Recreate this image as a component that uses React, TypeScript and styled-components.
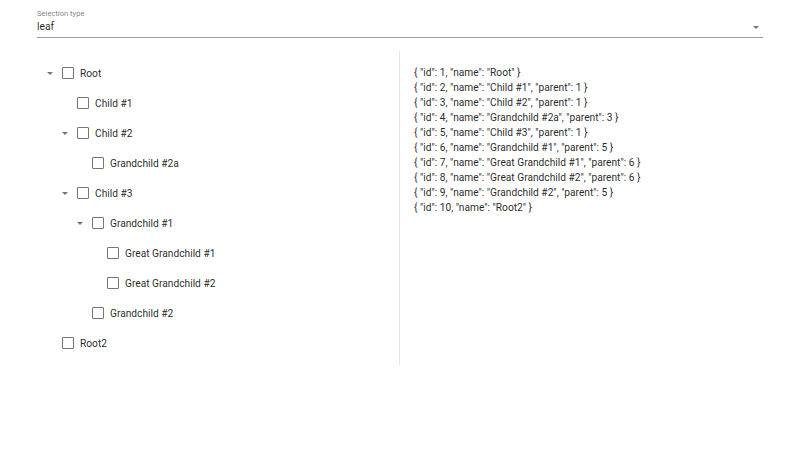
import React from "react";
import styled, { createGlobalStyle } from "styled-components";

type Node = { id: number; name: string; parent?: number };

const nodes: Node[] = [
  { id: 1, name: "Root" },
  { id: 2, name: "Child #1", parent: 1 },
  { id: 3, name: "Child #2", parent: 1 },
  { id: 4, name: "Grandchild #2a", parent: 3 },
  { id: 5, name: "Child #3", parent: 1 },
  { id: 6, name: "Grandchild #1", parent: 5 },
  { id: 7, name: "Great Grandchild #1", parent: 6 },
  { id: 8, name: "Great Grandchild #2", parent: 6 },
  { id: 9, name: "Grandchild #2", parent: 5 },
  { id: 10, name: "Root2" },
];

const GlobalStyle = createGlobalStyle`
  body {
    margin: 0;
    background: #fff;
    font-family: Roboto, "Liberation Sans", sans-serif;
    color: rgba(0, 0, 0, 0.87);
  }
`;

const Page = styled.div`
  padding: 8px 37px 0 37px;
`;

const Select = styled.div`
  display: flex;
  flex-direction: column;
  border-bottom: 1px solid #9e9e9e;
  padding-bottom: 3px;
`;

const Label = styled.div`
  font-size: 7.6px;
  line-height: 12px;
  color: rgba(0, 0, 0, 0.54);
`;

const ValueRow = styled.div`
  display: flex;
  align-items: center;
  justify-content: space-between;
  font-size: 10.2px;
  line-height: 14px;
  padding-right: 4px;
`;

const Caret = styled.span<{ size?: number }>`
  width: 0;
  height: 0;
  border-left: ${(p) => p.size ?? 3.5}px solid transparent;
  border-right: ${(p) => p.size ?? 3.5}px solid transparent;
  border-top: ${(p) => p.size ?? 3.5}px solid rgba(0, 0, 0, 0.54);
`;

const Columns = styled.div`
  display: grid;
  grid-template-columns: 362px 1fr;
  margin-top: 13px;
`;

const TreePane = styled.div`
  padding-top: 7px;
  height: 314px;
  box-sizing: border-box;
`;

const DataPane = styled.div`
  border-left: 1px solid #e6e6e6;
  padding: 14px 0 0 14px;
  height: 314px;
  box-sizing: border-box;
`;

const Row = styled.div<{ level: number }>`
  display: flex;
  align-items: center;
  height: 30px;
  padding-left: ${(p) => 5 + p.level * 15}px;
  font-size: 10.2px;
`;

const ArrowSlot = styled.div`
  width: 16px;
  display: flex;
  justify-content: center;
`;

const Box = styled.span`
  box-sizing: border-box;
  width: 12px;
  height: 12px;
  border: 1.5px solid #757575;
  border-radius: 1px;
  margin: 0 6px 0 4px;
`;

const Line = styled.div`
  font-size: 10.2px;
  line-height: 15px;
  color: rgba(0, 0, 0, 0.87);
  white-space: pre;
`;

const TreeNode = ({ node, level }: { node: Node; level: number }) => {
  const kids = nodes.filter((n) => n.parent === node.id);
  return (
    <>
      <Row level={level}>
        <ArrowSlot>{kids.length > 0 && <Caret size={3} />}</ArrowSlot>
        <Box />
        <span>{node.name}</span>
      </Row>
      {kids.map((k) => (
        <TreeNode key={k.id} node={k} level={level + 1} />
      ))}
    </>
  );
};

const fmt = (n: Node) =>
  `{ "id": ${n.id}, "name": "${n.name}"` +
  (n.parent !== undefined ? `, "parent": ${n.parent} }` : ` }`);

export default function App() {
  return (
    <Page>
      <GlobalStyle />
      <Select>
        <Label>Selection type</Label>
        <ValueRow>
          <span>leaf</span>
          <Caret />
        </ValueRow>
      </Select>
      <Columns>
        <TreePane>
          {nodes
            .filter((n) => n.parent === undefined)
            .map((n) => (
              <TreeNode key={n.id} node={n} level={0} />
            ))}
        </TreePane>
        <DataPane>
          {nodes.map((n) => (
            <Line key={n.id}>{fmt(n)}</Line>
          ))}
        </DataPane>
      </Columns>
    </Page>
  );
}
